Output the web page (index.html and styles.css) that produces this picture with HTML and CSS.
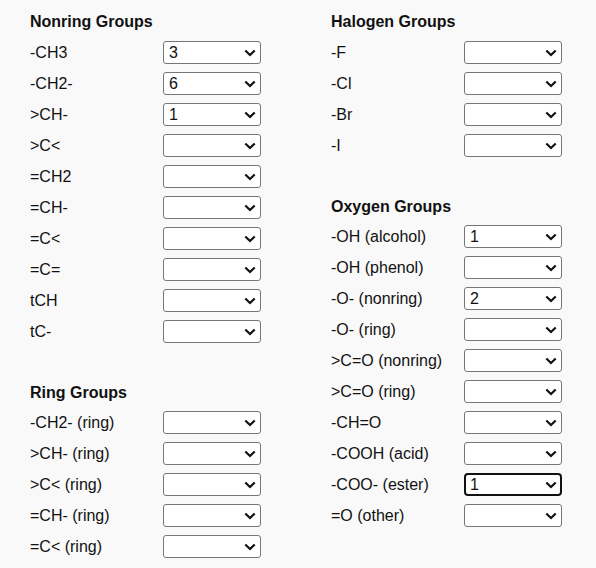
FILE: index.html
```html
<!DOCTYPE html>
<html lang="en">

<head>
    <meta charset="UTF-8">
    <meta name="viewport" content="width=device-width, initial-scale=1.0">
    <title>Group Contributions</title>
    <link rel="stylesheet" href="styles.css">
</head>

<body>
    <div class="groups-form">
        <div class="column">
            <section class="group">
                <h3>Nonring Groups</h3>
                <div class="row"><label>-CH3</label><select class="count"><option></option><option>1</option><option>2</option><option selected>3</option><option>4</option></select></div>
                <div class="row"><label>-CH2-</label><select class="count"><option></option><option>1</option><option>2</option><option>3</option><option selected>6</option></select></div>
                <div class="row"><label>&gt;CH-</label><select class="count"><option></option><option selected>1</option><option>2</option><option>3</option></select></div>
                <div class="row"><label>&gt;C&lt;</label><select class="count"><option></option><option>1</option><option>2</option></select></div>
                <div class="row"><label>=CH2</label><select class="count"><option></option><option>1</option><option>2</option></select></div>
                <div class="row"><label>=CH-</label><select class="count"><option></option><option>1</option><option>2</option></select></div>
                <div class="row"><label>=C&lt;</label><select class="count"><option></option><option>1</option><option>2</option></select></div>
                <div class="row"><label>=C=</label><select class="count"><option></option><option>1</option><option>2</option></select></div>
                <div class="row"><label>tCH</label><select class="count"><option></option><option>1</option><option>2</option></select></div>
                <div class="row"><label>tC-</label><select class="count"><option></option><option>1</option><option>2</option></select></div>
            </section>
            <section class="group">
                <h3>Ring Groups</h3>
                <div class="row"><label>-CH2- (ring)</label><select class="count"><option></option><option>1</option><option>2</option></select></div>
                <div class="row"><label>&gt;CH- (ring)</label><select class="count"><option></option><option>1</option><option>2</option></select></div>
                <div class="row"><label>&gt;C&lt; (ring)</label><select class="count"><option></option><option>1</option><option>2</option></select></div>
                <div class="row"><label>=CH- (ring)</label><select class="count"><option></option><option>1</option><option>2</option></select></div>
                <div class="row"><label>=C&lt; (ring)</label><select class="count"><option></option><option>1</option><option>2</option></select></div>
            </section>
        </div>

        <div class="column">
            <section class="group">
                <h3>Halogen Groups</h3>
                <div class="row"><label>-F</label><select class="count"><option></option><option>1</option><option>2</option></select></div>
                <div class="row"><label>-Cl</label><select class="count"><option></option><option>1</option><option>2</option></select></div>
                <div class="row"><label>-Br</label><select class="count"><option></option><option>1</option><option>2</option></select></div>
                <div class="row"><label>-I</label><select class="count"><option></option><option>1</option><option>2</option></select></div>
            </section>
            <section class="group">
                <h3>Oxygen Groups</h3>
                <div class="row"><label>-OH (alcohol)</label><select class="count"><option></option><option selected>1</option><option>2</option></select></div>
                <div class="row"><label>-OH (phenol)</label><select class="count"><option></option><option>1</option><option>2</option></select></div>
                <div class="row"><label>-O- (nonring)</label><select class="count"><option></option><option>1</option><option selected>2</option></select></div>
                <div class="row"><label>-O- (ring)</label><select class="count"><option></option><option>1</option><option>2</option></select></div>
                <div class="row"><label>&gt;C=O (nonring)</label><select class="count"><option></option><option>1</option><option>2</option></select></div>
                <div class="row"><label>&gt;C=O (ring)</label><select class="count"><option></option><option>1</option><option>2</option></select></div>
                <div class="row"><label>-CH=O</label><select class="count"><option></option><option>1</option><option>2</option></select></div>
                <div class="row"><label>-COOH (acid)</label><select class="count"><option></option><option>1</option><option>2</option></select></div>
                <div class="row"><label>-COO- (ester)</label><select class="count focused"><option></option><option selected>1</option><option>2</option></select></div>
                <div class="row"><label>=O (other)</label><select class="count"><option></option><option>1</option><option>2</option></select></div>
            </section>
        </div>
    </div>
</body>

</html>
```

FILE: styles.css
```css
body {
    font-family: "Liberation Sans", Arial, sans-serif;
    font-size: 16px;
    color: #111;
    background-color: #f9f9f9;
    margin: 0;
    padding: 0;
}

.groups-form {
    display: flex;
    padding: 13px 0 0 30px;
}

.column {
    flex: 0 0 301px;
}

.column + .column {
    flex-basis: 235px;
}

.group + .group {
    margin-top: 37px;
}

.group h3 {
    margin: 0 0 6px 0;
    font-size: 16px;
    line-height: 18px;
    font-weight: bold;
}

.group + .group h3 {
    margin-bottom: 5px;
}

.row {
    display: flex;
    align-items: center;
    height: 31px;
}

.row label {
    flex: 0 0 133px;
}

.count {
    appearance: none;
    -webkit-appearance: none;
    box-sizing: border-box;
    flex: 0 0 98px;
    width: 98px;
    height: 23px;
    padding: 0 20px 0 5px;
    font-family: "Liberation Sans", Arial, sans-serif;
    font-size: 16px;
    color: #111;
    background-color: #fff;
    background-image: url("data:image/svg+xml;utf8,<svg xmlns='http://www.w3.org/2000/svg' width='12' height='8' viewBox='0 0 12 8'><path d='M1.3 1.5 L6 6 L10.7 1.5' fill='none' stroke='%23111' stroke-width='2.2'/></svg>");
    background-repeat: no-repeat;
    background-position: right 4px center;
    border: 1px solid #767676;
    border-radius: 3px;
    outline: none;
}

.count.focused {
    border: 2px solid #111;
    border-radius: 4px;
    padding-left: 4px;
    background-position: right 3px center;
}
```
